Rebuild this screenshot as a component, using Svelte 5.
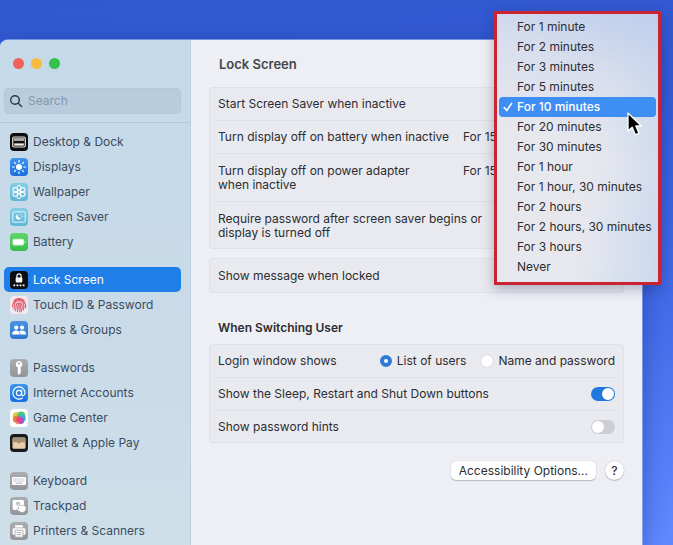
<script>
  let search = '';
  let activePane = 'Lock Screen';
  let activeDelay = 'For 10 minutes';
  let batteryDelay = 'For 15 minutes';
  let adapterDelay = 'For 15 minutes';
  let showMessage = false;
  let loginShows = 'list';
  let showPowerButtons = true;
  let showHints = false;

  const groups = [
    [
      { name: 'Desktop & Dock', icon: 'dock' },
      { name: 'Displays', icon: 'displays' },
      { name: 'Wallpaper', icon: 'wallpaper' },
      { name: 'Screen Saver', icon: 'saver' },
      { name: 'Battery', icon: 'battery' }
    ],
    [
      { name: 'Lock Screen', icon: 'lock' },
      { name: 'Touch ID & Password', icon: 'touch' },
      { name: 'Users & Groups', icon: 'users' }
    ],
    [
      { name: 'Passwords', icon: 'key' },
      { name: 'Internet Accounts', icon: 'at' },
      { name: 'Game Center', icon: 'game' },
      { name: 'Wallet & Apple Pay', icon: 'wallet' }
    ],
    [
      { name: 'Keyboard', icon: 'keyboard' },
      { name: 'Trackpad', icon: 'trackpad' },
      { name: 'Printers & Scanners', icon: 'printer' }
    ]
  ];

  const delays = [
    'For 1 minute',
    'For 2 minutes',
    'For 3 minutes',
    'For 5 minutes',
    'For 10 minutes',
    'For 20 minutes',
    'For 30 minutes',
    'For 1 hour',
    'For 1 hour, 30 minutes',
    'For 2 hours',
    'For 2 hours, 30 minutes',
    'For 3 hours',
    'Never'
  ];

  const rays = [0, 45, 90, 135, 180, 225, 270, 315];
  const petals = [0, 60, 120, 180, 240, 300];
</script>

<div class="desktop">
  <div class="window">
    <aside class="sidebar">
      <div class="lights">
        <button type="button" class="light close" aria-label="Close"></button>
        <button type="button" class="light minimize" aria-label="Minimize"></button>
        <button type="button" class="light zoom" aria-label="Zoom"></button>
      </div>

      <label class="search">
        <svg width="14" height="14" viewBox="0 0 14 14" fill="none" stroke="#26384a" stroke-width="1.4" stroke-linecap="round">
          <circle cx="6" cy="6" r="4.3" />
          <path d="M9.3 9.3 L12.6 12.6" />
        </svg>
        <input type="text" bind:value={search} placeholder="Search" aria-label="Search" />
      </label>

      <nav class="panes">
        {#each groups as group}
          <div class="group">
            {#each group as pane}
              <button
                type="button"
                class="pane"
                class:active={pane.name === activePane}
                on:click={() => (activePane = pane.name)}
              >
                <span class="icon {pane.icon}">
                  <svg width="18" height="18" viewBox="0 0 18 18" fill="none" aria-hidden="true">
                    {#if pane.icon === 'dock'}
                      <rect x="2.7" y="4" width="12.6" height="10" rx="1.4" fill="#111" stroke="#e9e6dd" stroke-width="1.2" />
                      <rect x="3.8" y="5" width="10.4" height="3" fill="#a9a69b" />
                      <rect x="4.2" y="10.4" width="9.6" height="2.2" fill="#f4f1e8" />
                    {:else if pane.icon === 'displays'}
                      <circle cx="9" cy="9" r="3" fill="#fff" />
                      {#each rays as angle}
                        <path d="M9 2.4 V4.3" stroke="#fff" stroke-width="1.1" stroke-linecap="round" transform="rotate({angle} 9 9)" />
                      {/each}
                    {:else if pane.icon === 'wallpaper'}
                      {#each petals as angle}
                        <ellipse cx="9" cy="5" rx="2.1" ry="2.7" stroke="#fff" stroke-width="1" transform="rotate({angle} 9 9)" />
                      {/each}
                      <circle cx="9" cy="9" r="1.9" stroke="#fff" stroke-width="1.2" />
                    {:else if pane.icon === 'saver'}
                      <rect x="2.8" y="3.8" width="12.4" height="10.4" rx="0.6" stroke="#dff6fb" stroke-width="1" />
                      <path d="M7.7 6.2 A2.8 2.8 0 1 0 11.2 9.8 A2.8 2.8 0 0 1 7.7 6.2 Z" fill="#fff" />
                      <circle cx="10.6" cy="6.8" r="0.6" fill="#fff" />
                      <circle cx="12.4" cy="8.3" r="0.5" fill="#fff" />
                    {:else if pane.icon === 'battery'}
                      <rect x="2.4" y="5.8" width="11.8" height="6.6" rx="2" fill="#c9f5ca" />
                      <rect x="3.4" y="6.7" width="9.8" height="4.8" rx="1.2" fill="#fff" />
                      <path d="M14.9 7.8 Q16.2 9.1 14.9 10.4 Z" fill="#fff" />
                    {:else if pane.icon === 'lock'}
                      <path d="M6.9 7 V5 A2.1 2.1 0 0 1 11.1 5 V7" stroke="#fff" stroke-width="1.2" />
                      <rect x="5.7" y="6.5" width="6.6" height="5" rx="0.8" fill="#fff" />
                      <path d="M3.4 14.4 H14.8" stroke="#fff" stroke-width="1.8" stroke-dasharray="1.8 1.3" />
                    {:else if pane.icon === 'touch'}
                      <g stroke="#e0566c" stroke-width="1.1" stroke-linecap="round">
                        <path d="M4 4.6 A7 7 0 0 1 14 4.6" />
                        <path d="M2.6 11 A6.6 6.6 0 0 1 15.4 8 Q16 10 15.3 12" />
                        <path d="M4 13.2 Q4.4 12 4.2 10 A4.8 4.8 0 0 1 13.8 9 Q14 12 13.2 14" />
                        <path d="M5.5 14.8 Q6.2 12 6 9.8 A3.1 3.1 0 0 1 12.1 9.6 Q12.3 13 11.3 15.4" />
                        <path d="M7.4 15.6 Q8 13 7.7 9.8 A1.4 1.4 0 0 1 10.4 9.6 Q10.6 13 9.5 15.9" />
                        <path d="M9 10 Q9.3 12 9 13.2" />
                      </g>
                    {:else if pane.icon === 'users'}
                      <circle cx="6.2" cy="6.6" r="2.1" fill="#fff" />
                      <circle cx="12" cy="6.6" r="2.1" fill="#fff" />
                      <path d="M2 13.4 Q2.2 9.6 6.2 9.6 Q8 9.6 9.1 10.8 Q10.2 9.6 12 9.6 Q16 9.6 16.2 13.4 Z" fill="#fff" />
                      <path d="M9.1 10.8 Q10 11.8 10.1 13.4" stroke="#3f83d3" stroke-width="0.7" />
                    {:else if pane.icon === 'key'}
                      <path
                        d="M9 2 A3.4 3.4 0 0 1 10.3 8.5 V9.6 L11.3 10.6 L10.3 11.6 L11.3 12.7 L10.3 13.7 V14.6 L9 16 L7.8 14.8 V8.5 A3.4 3.4 0 0 1 9 2 Z"
                        fill="#fff"
                      />
                      <circle cx="9" cy="4.4" r="1" fill="#a0a1a4" />
                    {:else if pane.icon === 'at'}
                      <circle cx="9" cy="9" r="2.6" stroke="#fff" stroke-width="1.1" />
                      <path
                        d="M11.7 6.3 V10 Q11.8 11.7 13.2 11.6 Q15.2 11.2 15 8.4 A6.1 6.1 0 1 0 12.4 14"
                        stroke="#fff"
                        stroke-width="1.1"
                        stroke-linecap="round"
                      />
                    {:else if pane.icon === 'game'}
                      <circle cx="6.6" cy="7.2" r="3.9" fill="#e7c43c" />
                      <circle cx="11.2" cy="6.4" r="4" fill="#4bc47e" />
                      <circle cx="6.3" cy="10.3" r="3.4" fill="#ee7a3d" />
                      <circle cx="12.3" cy="9.4" r="3.4" fill="#35a9e0" />
                      <circle cx="10.8" cy="11.8" r="3.3" fill="#b34fd0" />
                      <circle cx="9.2" cy="10.6" r="3" fill="#ef3e7d" opacity="0.85" />
                      <path d="M6 13 L6.4 15.6 L9 14.2 Z" fill="#ee7a3d" />
                    {:else if pane.icon === 'wallet'}
                      <rect x="2.5" y="3.5" width="13" height="11.3" rx="1.4" fill="#e8cfac" />
                      <path d="M2.5 5 Q2.5 3.5 4 3.5 H14 Q15.5 3.5 15.5 5 V7 H2.5 Z" fill="#9c9379" />
                      <path d="M2.5 7 H15.5 V8.2 H11 Q10.6 9.4 9 9.4 Q7.4 9.4 7 8.2 H2.5 Z" fill="#b68e5e" />
                    {:else if pane.icon === 'keyboard'}
                      <rect x="2" y="5" width="14" height="8" rx="1.2" fill="#fff" />
                      <path d="M3.2 7 H14.8 M3.2 9 H14.8" stroke="#a7a9ac" stroke-width="0.9" stroke-dasharray="1 0.6" />
                      <path d="M5.4 11.2 H12.6" stroke="#a7a9ac" stroke-width="0.9" />
                    {:else if pane.icon === 'trackpad'}
                      <rect x="2.6" y="3" width="11.4" height="10" rx="1.4" fill="#fff" />
                      <circle cx="8" cy="6.6" r="1.5" stroke="#9a9ca0" stroke-width="0.8" />
                      <path
                        d="M7.2 6.4 Q8 5.6 8.7 6.5 L10 9 Q13 7.6 15 8.6 Q16.8 10.4 15.8 13.2 Q14 16.2 11 15.4 L6.4 12.6 Q6.4 11.4 8.8 11.8 Z"
                        fill="#fff"
                        stroke="#9a9ca0"
                        stroke-width="0.6"
                      />
                    {:else if pane.icon === 'printer'}
                      <path d="M5 5.4 V4.2 Q5 3.2 6 3.2 H12 Q13 3.2 13 4.2 V5.4 Z" fill="#fff" />
                      <rect x="2.6" y="6.2" width="12.8" height="6.8" rx="1.4" fill="#fff" />
                      <rect x="5" y="8.2" width="8" height="7" rx="0.5" fill="#fff" stroke="#97999d" stroke-width="0.8" />
                      <path d="M6.6 10.6 H11.4 M6.6 12.7 H11.4" stroke="#97999d" stroke-width="0.8" />
                    {/if}
                  </svg>
                </span>
                {pane.name}
              </button>
            {/each}
          </div>
        {/each}
      </nav>
    </aside>

    <main class="content">
      <h1>Lock Screen</h1>

      <section class="card">
        <div class="row">
          <span>Start Screen Saver when inactive</span>
          <div class="popup">
            <div class="menu" role="listbox" aria-label="Start Screen Saver when inactive">
              {#each delays as delay}
                <button
                  type="button"
                  class="option"
                  class:selected={delay === activeDelay}
                  role="option"
                  aria-selected={delay === activeDelay}
                  on:click={() => (activeDelay = delay)}
                >
                  <span class="check">
                    {#if delay === activeDelay}
                      <svg width="10" height="10" viewBox="0 0 10 10" fill="none" stroke="#fff" stroke-width="1.6" stroke-linecap="round" stroke-linejoin="round">
                        <path d="M1.2 5.6 L3.8 8.6 L8.6 1.4" />
                      </svg>
                    {/if}
                  </span>
                  {delay}
                </button>
              {/each}
              <svg class="cursor" width="18" height="28" viewBox="0 0 18 28" aria-hidden="true">
                <path
                  d="M2 2 V20 L6.2 16.2 L9.4 23.8 L13 22.2 L9.8 15 H15.4 Z"
                  fill="#000"
                  stroke="#fff"
                  stroke-width="1.3"
                  stroke-linejoin="round"
                />
              </svg>
            </div>
          </div>
        </div>
        <div class="row">
          <label for="battery-delay">Turn display off on battery when inactive</label>
          <select id="battery-delay" bind:value={batteryDelay}>
            <option>For 15 minutes</option>
          </select>
        </div>
        <div class="row tall">
          <label for="adapter-delay">Turn display off on power adapter<br />when inactive</label>
          <select id="adapter-delay" bind:value={adapterDelay}>
            <option>For 15 minutes</option>
          </select>
        </div>
        <div class="row tall">
          <span>Require password after screen saver begins or<br />display is turned off</span>
        </div>
      </section>

      <section class="card message">
        <div class="row">
          <label for="show-message">Show message when locked</label>
          <input id="show-message" class="switch" type="checkbox" bind:checked={showMessage} />
        </div>
      </section>

      <h2>When Switching User</h2>

      <section class="card">
        <div class="row">
          <span>Login window shows</span>
          <div class="radios">
            <label>
              <input type="radio" name="login" value="list" bind:group={loginShows} />
              List of users
            </label>
            <label>
              <input type="radio" name="login" value="name" bind:group={loginShows} />
              Name and password
            </label>
          </div>
        </div>
        <div class="row">
          <label for="power-buttons">Show the Sleep, Restart and Shut Down buttons</label>
          <input id="power-buttons" class="switch" type="checkbox" bind:checked={showPowerButtons} />
        </div>
        <div class="row">
          <label for="hints">Show password hints</label>
          <input id="hints" class="switch" type="checkbox" bind:checked={showHints} />
        </div>
      </section>

      <div class="actions">
        <button type="button" class="push">Accessibility Options...</button>
        <button type="button" class="help" aria-label="Help">?</button>
      </div>
    </main>
  </div>
</div>

<style>
  :global(body) {
    overflow: hidden;
  }

  .desktop {
    box-sizing: border-box;
    display: flex;
    min-height: 100vh;
    padding: 40px 31px 0 0;
    background: linear-gradient(170deg, #3159cf 0%, #3359d3 30%, #4068e6 60%, #6189ff 100%);
    font-family: Inter, 'Liberation Sans', sans-serif;
    font-size: 12px;
    line-height: 14px;
    color: #2b2d31;
  }

  .window {
    flex: 1;
    display: flex;
    background: #eeeff4;
    border-radius: 8px 8px 0 0;
    box-shadow: 0 0 0 1px rgba(190, 212, 255, 0.5), 0 8px 24px rgba(10, 25, 100, 0.4);
  }

  button,
  input,
  select {
    font: inherit;
    color: inherit;
  }

  button {
    padding: 0;
    border: none;
    background: none;
  }

  .sidebar {
    box-sizing: border-box;
    width: 191px;
    flex-shrink: 0;
    background: linear-gradient(180deg, #c6d9e8 0%, #c9dbe9 60%, #cfdfe9 100%);
    border-right: 1px solid #bfd0e0;
    border-radius: 8px 0 0 0;
    color: #3a4c5e;
  }

  .lights {
    display: flex;
    gap: 7px;
    padding: 18px 13px;
  }

  .light {
    width: 11px;
    height: 11px;
    border-radius: 50%;
  }

  .close {
    background: #ee6259;
  }

  .minimize {
    background: #f5bd40;
  }

  .zoom {
    background: #33c24b;
  }

  .search {
    display: flex;
    align-items: center;
    gap: 5px;
    height: 26px;
    margin: 1px 9px 8px 4px;
    padding: 0 5px;
    background: #b9ccdd;
    border-radius: 5px;
    box-shadow: inset 0 0 0 1px #b5c7d8;
    box-sizing: border-box;
  }

  .search input {
    flex: 1;
    min-width: 0;
    padding: 0;
    border: none;
    outline: none;
    background: none;
  }

  .search input::placeholder {
    color: #8498ab;
    opacity: 1;
  }

  .panes {
    display: flex;
    flex-direction: column;
    gap: 13px;
    padding: 6px 9px 0 4px;
    border-top: 1px solid #b6c8d6;
  }

  .group {
    display: flex;
    flex-direction: column;
  }

  .pane {
    display: flex;
    align-items: center;
    gap: 5px;
    height: 25px;
    padding: 0 6px;
    border-radius: 5px;
    text-align: left;
    white-space: nowrap;
  }

  .pane.active {
    background: #207ee9;
    color: #fff;
  }

  .icon {
    width: 18px;
    height: 18px;
    flex-shrink: 0;
    border-radius: 4px;
    overflow: hidden;
  }

  .icon svg,
  .check svg {
    display: block;
  }

  .dock,
  .lock {
    background: #0c0d10;
  }

  .displays,
  .at {
    background: linear-gradient(#3f94ee, #1a6fe0);
  }

  .wallpaper,
  .saver {
    background: linear-gradient(#83cfe6, #5fb6d6);
  }

  .battery {
    background: linear-gradient(#5fd56b, #38bd4c);
  }

  .touch {
    background: #f6e9ee;
  }

  .users {
    background: linear-gradient(#4b92e2, #2f78cd);
  }

  .key,
  .keyboard,
  .trackpad,
  .printer {
    background: linear-gradient(#abadb0, #929498);
  }

  .game {
    background: #fff;
  }

  .wallet {
    background: #181a1c;
  }

  .content {
    flex: 1;
    min-width: 0;
    padding: 15px 18px 24px;
  }

  h1 {
    margin: 0;
    padding: 0 10px 14px;
    font-size: 13px;
    line-height: 18px;
    font-weight: 600;
    color: #44464b;
  }

  h2 {
    margin: 0;
    padding: 28px 9px 9px;
    font-size: 12px;
    line-height: 14px;
    font-weight: 600;
  }

  .card {
    padding: 0 9px;
    background: #e9eaef;
    border-radius: 4px;
    box-shadow: inset 0 0 0 1px #e0e1e7;
  }

  .message {
    margin-top: 9px;
    padding: 1px 9px;
  }

  .row {
    box-sizing: border-box;
    display: flex;
    align-items: center;
    justify-content: space-between;
    min-height: 33px;
    border-top: 1px solid #dedfe5;
  }

  .row:first-child {
    border-top: none;
  }

  .tall {
    align-items: flex-start;
    height: 48px;
    padding-top: 10px;
  }

  select {
    appearance: none;
    width: 152px;
    padding: 0;
    border: none;
    background: none;
  }

  .popup {
    position: relative;
    align-self: stretch;
  }

  .menu {
    box-sizing: border-box;
    position: absolute;
    top: -76px;
    right: -46px;
    z-index: 1;
    width: 167px;
    padding: 3px 2px 5px;
    border: 3px solid #cb2331;
    background: linear-gradient(100deg, rgba(230, 231, 238, 0) 60%, rgba(196, 213, 238, 0.8)),
      linear-gradient(200deg, #bccdec 0%, #d8deed 25%, #e7e8ee 50%);
    box-shadow: 0 4px 12px rgba(20, 30, 80, 0.3);
  }

  .option {
    display: flex;
    align-items: center;
    width: 100%;
    height: 20px;
    border-radius: 4px;
    white-space: nowrap;
  }

  .option.selected {
    background: #3f8ef3;
    color: #fff;
    font-weight: 500;
  }

  .check {
    width: 14px;
    padding-left: 4px;
  }

  .cursor {
    position: absolute;
    top: 97px;
    right: 14px;
  }

  .radios {
    display: flex;
    gap: 15px;
  }

  .radios label {
    display: flex;
    align-items: center;
    gap: 5px;
  }

  input[type='radio'] {
    appearance: none;
    box-sizing: border-box;
    width: 12px;
    height: 12px;
    margin: 0;
    border-radius: 50%;
    background: #fff;
    box-shadow: 0 0 1px rgba(0, 0, 0, 0.3);
  }

  input[type='radio']:checked {
    border: 4px solid #2b7bd6;
    box-shadow: none;
  }

  .switch {
    appearance: none;
    box-sizing: border-box;
    width: 24px;
    height: 14px;
    margin: 0;
    padding: 1px;
    border-radius: 7px;
    background: #cdced3;
  }

  .switch::before {
    content: '';
    display: block;
    width: 12px;
    height: 12px;
    border-radius: 50%;
    background: #fff;
  }

  .switch:checked {
    background: #1f78dc;
  }

  .switch:checked::before {
    margin-left: auto;
  }

  .actions {
    display: flex;
    justify-content: flex-end;
    gap: 9px;
    margin-top: 18px;
  }

  .push,
  .help {
    height: 19px;
    background: #fff;
    box-shadow: 0 0 1px rgba(0, 0, 0, 0.3), 0 1px 1px rgba(0, 0, 0, 0.2);
  }

  .push {
    padding: 0 8px;
    border-radius: 5px;
  }

  .help {
    width: 19px;
    border-radius: 50%;
    font-weight: 500;
  }
</style>
